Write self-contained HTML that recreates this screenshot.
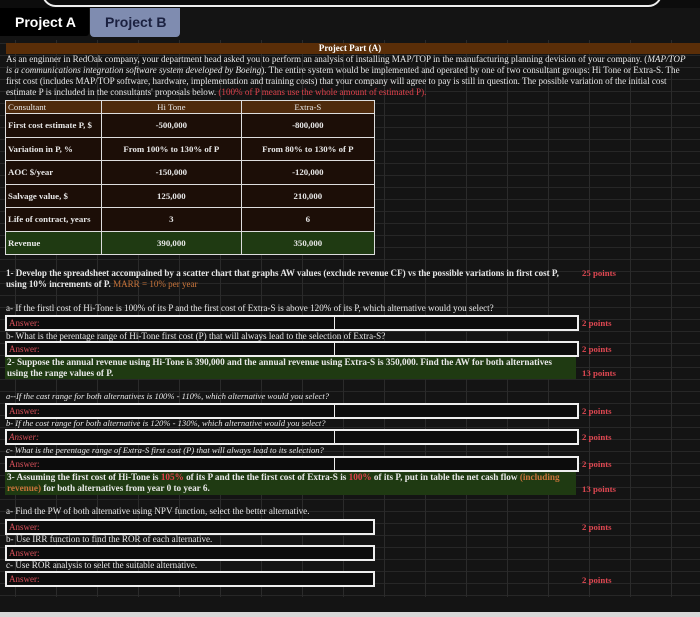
<!DOCTYPE html>
<html><head><meta charset="utf-8"><style>
*{margin:0;padding:0;box-sizing:border-box}
body{width:700px;height:617px;overflow:hidden;background:#141414;position:relative;font-family:"Liberation Serif",serif;color:#e8e8e8}
.grid{position:absolute;left:0;top:40px;width:700px;height:572px;
background-image:linear-gradient(to right,#2b2b2b 1px,transparent 1px),linear-gradient(to bottom,#272727 1px,transparent 1px);
background-size:41px 12px;background-position:15px 0,0 3px}
.a{position:absolute;white-space:nowrap}
.t{font-size:9.1px;line-height:11.3px}
.i{font-size:8.6px;font-style:italic}
.b{font-weight:bold}
.red{color:#e0414b}
.pts{position:absolute;left:582px;font-size:8.8px;font-weight:bold;color:#e04852}
.box{position:absolute;left:5px;border:2px solid #eee;background:#0c0c0c;height:16px;font-size:9px;line-height:12px;color:#d8505a;padding-left:2px}
.green{position:absolute;left:5px;width:571px;background:#1f3a12;font-size:9.2px;font-weight:bold;line-height:11px;padding-left:2px}
table{position:absolute;left:5px;top:100px;border-collapse:collapse;width:370px;font-size:8.8px}
td{border:1.5px solid #ddd;background:#1c0e07;text-align:center;font-weight:bold;height:23.5px}
td:first-child{text-align:left;padding-left:2px}
.dv{position:absolute;left:327px;top:0;height:12px;border-left:1.5px solid #eee}
</style></head><body>
<div class="grid"></div>
<div class="a" style="left:0;top:0;width:700px;height:8px;background:#0c0c0c"></div>
<div class="a" style="left:42px;top:-20px;width:620px;height:27px;border:2px solid #eee;border-radius:14px"></div>
<div class="a" style="left:0;top:8px;width:89px;height:28px;background:#000;border-radius:0 0 3px 0;font-family:'Liberation Sans',sans-serif;font-weight:bold;font-size:14px;color:#fff;line-height:28px;padding-left:15px">Project A</div>
<div class="a" style="left:90px;top:8px;width:90px;height:29px;background:#7f8cb0;border-radius:0 0 4px 4px;font-family:'Liberation Sans',sans-serif;font-weight:bold;font-size:14px;color:#1b2140;line-height:28px;padding-left:15px">Project B</div>
<div class="a" style="left:6px;top:43px;width:694px;height:11px;background:#5a2e08"></div>
<div class="a t b" style="left:0;top:43px;width:700px;text-align:center;color:#fff">Project Part (A)</div>
<div class="a t" style="left:6px;top:54px">As an enginner in RedOak company, your department head asked you to perform an analysis of installing MAP/TOP in the manufacturing planning devision of your company. (<i>MAP/TOP</i></div>
<div class="a t" style="left:6px;top:65px"><i>is a communications integration software system developed by Boeing</i>). The entire system would be implemented and operated by one of two consultant groups: Hi Tone or Extra-S. The</div>
<div class="a t" style="left:6px;top:76px">first cost (includes MAP/TOP software, hardware, implementation and training costs) that your company will agree to pay is still in question. The possible variation of the initial cost</div>
<div class="a t" style="left:6px;top:87px">estimate P is included in the consultants' proposals below. <span class="red">(100% of P means use the whole amount of estimated P).</span></div>
<table>
<tr><td style="height:13px;font-weight:normal;background:#4e2a0c;width:96px">Consultant</td><td style="height:13px;font-weight:normal;background:#4e2a0c">Hi Tone</td><td style="height:13px;font-weight:normal;background:#4e2a0c">Extra-S</td></tr>
<tr><td>First cost estimate P, $</td><td>-500,000</td><td>-800,000</td></tr>
<tr><td>Variation in P, %</td><td>From 100% to 130% of P</td><td>From 80% to 130% of P</td></tr>
<tr><td>AOC $/year</td><td>-150,000</td><td>-120,000</td></tr>
<tr><td>Salvage value, $</td><td>125,000</td><td>210,000</td></tr>
<tr><td>Life of contract, years</td><td>3</td><td>6</td></tr>
<tr><td style="background:#1f3a12">Revenue</td><td style="background:#1f3a12">390,000</td><td style="background:#1f3a12">350,000</td></tr>
</table>
<div class="a t b" style="left:6px;top:268px;font-size:9.05px">1- Develop the spreadsheet accompained by a scatter chart that graphs AW values (exclude revenue CF) vs the possible variations in first cost P,</div>
<div class="a t b" style="left:6px;top:279px;font-size:9.05px">using 10% increments of P. <span style="color:#c9743a;font-weight:normal">MARR = 10% per year</span></div>
<div class="pts" style="top:268px">25 points</div>
<div class="a t" style="left:6px;top:303px">a- If the firstl cost of Hi-Tone is 100% of its P and the first cost of Extra-S is above 120% of its P, which alternative would you select?</div>
<div class="box" style="top:315px;width:574px">Answer:<span class="dv"></span></div>
<div class="pts" style="top:318px">2 points</div>
<div class="a t" style="left:6px;top:331px">b- What is the perentage range of Hi-Tone first cost (P) that will always lead to the selection of Extra-S?</div>
<div class="box" style="top:341px;width:574px">Answer:<span class="dv"></span></div>
<div class="pts" style="top:344px">2 points</div>
<div class="green" style="top:357px;height:22px">2- Suppose the annual revenue using Hi-Tone is 390,000 and the annual revenue using Extra-S is 350,000.  Find the AW for both alternatives<br>using the range values of P.</div>
<div class="pts" style="top:368px">13 points</div>
<div class="a t i" style="left:6px;top:391px">a--If the cast range for both alternatives is 100% - 110%, which alternative would you select?</div>
<div class="box" style="top:403px;width:574px">Answer:<span class="dv"></span></div>
<div class="pts" style="top:406px">2 points</div>
<div class="a t i" style="left:6px;top:418px">b- If the cost range for both alternative is 120% - 130%, which alternative would you select?</div>
<div class="box" style="top:429px;width:574px"><i>Answer:</i><span class="dv"></span></div>
<div class="pts" style="top:432px">2 points</div>
<div class="a t i" style="left:6px;top:445px">c- What is the perentage range of Extra-S first cost (P) that will always lead to its selection?</div>
<div class="box" style="top:456px;width:574px">Answer:<span class="dv"></span></div>
<div class="pts" style="top:459px">2 points</div>
<div class="green" style="top:472px;height:23px">3-  Assuming the first cost of Hi-Tone is <span class="red">105%</span> of its P and the the first cost of Extra-S is <span class="red">100%</span> of its P, put in table the net cash flow <span style="color:#c9743a">(including<br>revenue)</span> for both alternatives from year 0 to year 6.</div>
<div class="pts" style="top:484px">13 points</div>
<div class="a t" style="left:6px;top:506px">a- Find the PW of both alternative using NPV function, select the better alternative.</div>
<div class="box" style="top:519px;width:370px">Answer:</div>
<div class="pts" style="top:522px">2 points</div>
<div class="a t" style="left:6px;top:534px">b- Use IRR function to find the ROR of each alternative.</div>
<div class="box" style="top:545px;width:370px">Answer:</div>
<div class="a t" style="left:6px;top:560px">c- Use ROR analysis to selet the suitable alternative.</div>
<div class="box" style="top:571px;width:370px">Answer:</div>
<div class="pts" style="top:575px">2 points</div>
<div class="a" style="left:0;top:597px;width:700px;height:15px;background:#141414"></div>
<div class="a" style="left:0;top:612px;width:700px;height:5px;background:#d8d8d8"></div>
</body></html>
